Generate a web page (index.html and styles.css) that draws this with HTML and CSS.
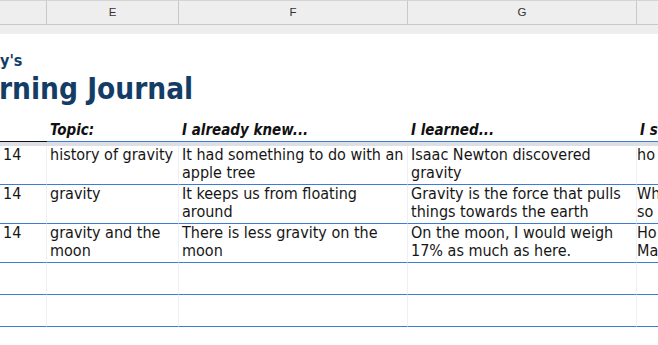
FILE: index.html
```html
<!DOCTYPE html>
<html>
<head>
<meta charset="utf-8">
<link rel="stylesheet" href="styles.css">
</head>
<body>
<div class="sheet">
  <div class="colhead">
    <div class="ch ch-d"></div>
    <div class="ch">E</div>
    <div class="ch">F</div>
    <div class="ch">G</div>
    <div class="ch ch-h"></div>
  </div>
  <div class="strip"></div>
  <div class="title">
    <div class="t-small">y's</div>
    <div class="t-big">rning Journal</div>
  </div>
  <div class="grid">
    <div class="hd hd-d"></div>
    <div class="hd">Topic:</div>
    <div class="hd">I already knew...</div>
    <div class="hd">I learned...</div>
    <div class="hd hd-h">I s</div>

    <div class="band"></div>

    <div class="c r2">14</div>
    <div class="c r2">history of gravity</div>
    <div class="c r2">It had something to do with an apple tree</div>
    <div class="c r2">Isaac Newton discovered gravity</div>
    <div class="c r2 h">ho</div>

    <div class="c r2">14</div>
    <div class="c r2">gravity</div>
    <div class="c r2">It keeps us from floating around</div>
    <div class="c r2">Gravity is the force that pulls things towards the earth</div>
    <div class="c r2 h">Wh<br>so</div>

    <div class="c r2">14</div>
    <div class="c r2">gravity and the moon</div>
    <div class="c r2">There is less gravity on the moon</div>
    <div class="c r2">On the moon, I would weigh 17% as much as here.</div>
    <div class="c r2 h">Ho<br>Ma</div>

    <div class="c r1"></div>
    <div class="c r1"></div>
    <div class="c r1"></div>
    <div class="c r1"></div>
    <div class="c r1 h"></div>

    <div class="c r1"></div>
    <div class="c r1"></div>
    <div class="c r1"></div>
    <div class="c r1"></div>
    <div class="c r1 h"></div>
  </div>
</div>
</body>
</html>
```
FILE: styles.css
```css
html, body {
  margin: 0;
  padding: 0;
  background: #ffffff;
}
body {
  width: 658px;
  height: 345px;
  overflow: hidden;
}
.sheet {
  width: 658px;
}
.colhead {
  display: grid;
  grid-template-columns: 47px 132px 229px 229px 1fr;
  height: 25px;
  box-sizing: border-box;
  background: #eeeeee;
  border-top: 1px solid #d4d4d4;
  border-bottom: 1px solid #c8c8c8;
}
.ch {
  border-right: 1px solid #c8c8c8;
  font-family: "Liberation Sans", Arial, sans-serif;
  font-size: 11.5px;
  color: #333333;
  text-align: center;
  line-height: 23px;
}
.ch-h {
  border-right: none;
}
.strip {
  height: 9px;
  background: #eeeeee;
}
.title {
  font-family: "DejaVu Sans Condensed", "DejaVu Sans", sans-serif;
  font-weight: bold;
  color: #143d66;
  padding-top: 16px;
  height: 88px;
  box-sizing: border-box;
}
.t-small {
  font-size: 16px;
  line-height: 22px;
}
.t-big {
  font-size: 29.5px;
  line-height: 34px;
  margin-left: -1px;
}
.grid {
  display: grid;
  grid-template-columns: 47px 132px 229px 229px 1fr;
  font-family: "DejaVu Sans Condensed", "DejaVu Sans", sans-serif;
  color: #161616;
}
.hd {
  font-size: 15px;
  font-weight: bold;
  font-style: italic;
  line-height: 16px;
  height: 20px;
  box-sizing: border-box;
  padding: 0 0 0 3px;
  border-bottom: 1px solid #3f7bd6;
  color: #111111;
  white-space: nowrap;
}
.hd-d {
  border-bottom-color: #111111;
}
.band {
  grid-column: 1 / -1;
  height: 4px;
  background: #dcdfe5;
}
.c {
  font-size: 16px;
  line-height: 18px;
  padding: 0 0 0 3px;
  box-sizing: border-box;
  border-bottom: 1px solid #3f7bd6;
  border-right: 1px solid #edf0f5;
  overflow: hidden;
}
.c:nth-child(5n+1) {
  padding-left: 0;
}
.r2 {
  height: 39px;
}
.r1 {
  height: 32px;
}
.h {
  white-space: nowrap;
  border-right: none;
  padding-left: 4px;
}
```
